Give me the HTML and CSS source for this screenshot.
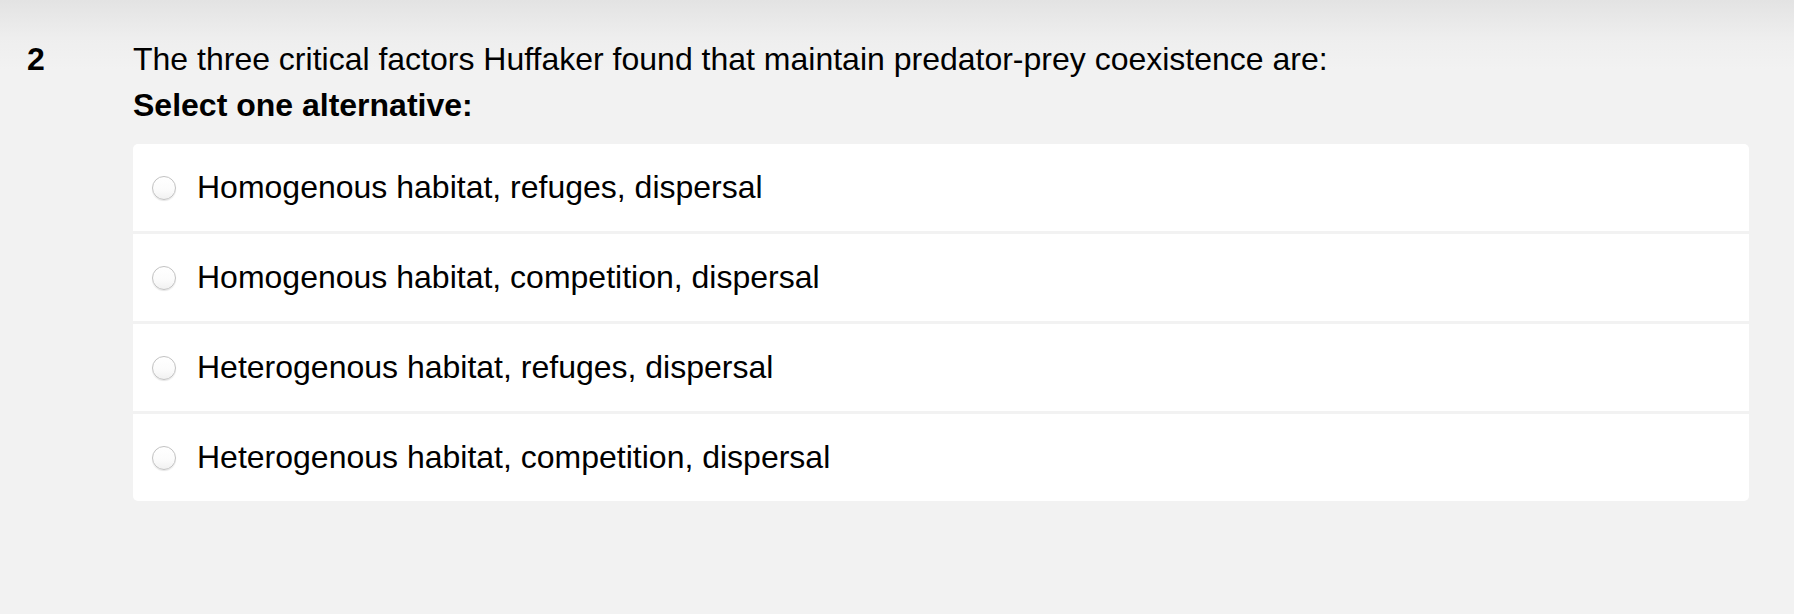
FILE: index.html
```html
<!DOCTYPE html>
<html>
<head>
<meta charset="utf-8">
<link rel="stylesheet" href="styles.css">
</head>
<body>
<div class="page">
  <div class="question">
    <div class="qnum">2</div>
    <div class="qbody">
      <p class="qtext">The three critical factors Huffaker found that maintain predator-prey coexistence are:</p>
      <p class="qhint">Select one alternative:</p>
      <div class="options">
        <label class="option"><span class="radio"></span><span class="otext">Homogenous habitat, refuges, dispersal</span></label>
        <label class="option"><span class="radio"></span><span class="otext">Homogenous habitat, competition, dispersal</span></label>
        <label class="option"><span class="radio"></span><span class="otext">Heterogenous habitat, refuges, dispersal</span></label>
        <label class="option"><span class="radio"></span><span class="otext">Heterogenous habitat, competition, dispersal</span></label>
      </div>
    </div>
  </div>
</div>
</body>
</html>
```
FILE: styles.css
```css
html, body {
  margin: 0;
  padding: 0;
}
body {
  width: 1794px;
  height: 614px;
  overflow: hidden;
  background: linear-gradient(to bottom, #e3e3e3 0px, #eeeeee 38px, #f2f2f2 70px, #f2f2f2 100%);
  font-family: "Liberation Sans", Arial, sans-serif;
  color: #000;
}
.page {
  padding: 36px 45px 0 27px;
}
.question {
  display: flex;
}
.qnum {
  width: 106px;
  flex: none;
  font-size: 32px;
  font-weight: bold;
  line-height: 46px;
}
.qbody {
  flex: 1;
}
.qtext, .qhint {
  margin: 0;
  font-size: 32px;
  line-height: 46px;
}
.qhint {
  font-weight: bold;
}
.options {
  margin-top: 16px;
  display: flex;
  flex-direction: column;
  gap: 3px;
}
.option {
  display: flex;
  align-items: center;
  height: 87px;
  background: #ffffff;
  padding-left: 19px;
}
.option:first-child {
  border-radius: 5px 5px 0 0;
}
.option:last-child {
  border-radius: 0 0 5px 5px;
}
.radio {
  width: 24px;
  height: 24px;
  box-sizing: border-box;
  border-radius: 50%;
  border: 1px solid #c2c2c2;
  background: linear-gradient(to bottom, #ffffff 0%, #fbfbfb 60%, #f1f1f1 100%);
  box-shadow: 0 1px 1px rgba(0,0,0,0.10);
  flex: none;
}
.otext {
  margin-left: 21px;
  font-size: 32px;
}
```
